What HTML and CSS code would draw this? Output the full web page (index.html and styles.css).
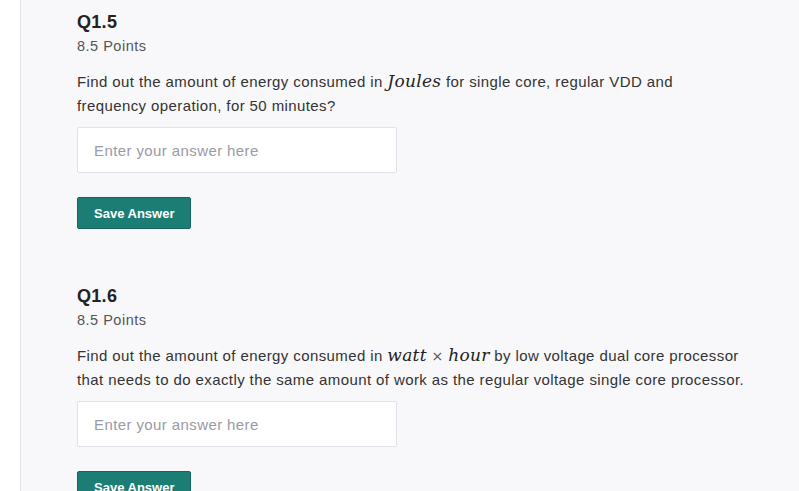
FILE: index.html
```html
<!DOCTYPE html>
<html>
<head>
<meta charset="utf-8">
<link rel="stylesheet" href="styles.css">
</head>
<body>
<div class="page">
  <div class="gutter"></div>
  <main class="main">
    <section class="question">
      <h2 class="qtitle">Q1.5</h2>
      <div class="points">8.5 Points</div>
      <p class="qtext">Find out the amount of energy consumed in <span class="math">Joules</span> for single core, regular VDD and frequency operation, for 50 minutes?</p>
      <input class="answer" type="text" placeholder="Enter your answer here">
      <button class="save">Save Answer</button>
    </section>
    <section class="question">
      <h2 class="qtitle">Q1.6</h2>
      <div class="points">8.5 Points</div>
      <p class="qtext">Find out the amount of energy consumed in <span class="math">watt</span> <span class="times">×</span> <span class="math">hour</span> by low voltage dual core processor that needs to do exactly the same amount of work as the regular voltage single core processor.</p>
      <input class="answer" type="text" placeholder="Enter your answer here">
      <button class="save">Save Answer</button>
    </section>
  </main>
</div>
</body>
</html>
```
FILE: styles.css
```css
html, body {
  margin: 0;
  padding: 0;
  height: 100%;
  overflow: hidden;
}
body {
  font-family: "Liberation Sans", Arial, sans-serif;
  background: #f8f8fa;
}
.page {
  display: flex;
  min-height: 100%;
}
.gutter {
  width: 20px;
  flex: none;
  background: #ffffff;
  border-right: 1px solid #e2e2ea;
}
.main {
  flex: 1;
  padding: 11px 0 0 56px;
}
.question {
  display: flex;
  flex-direction: column;
  align-items: flex-start;
  margin-bottom: 56px;
}
.qtitle {
  margin: 0;
  font-size: 18px;
  line-height: 22px;
  font-weight: 700;
  letter-spacing: 0.3px;
  color: #222;
}
.points {
  margin-top: 3px;
  font-size: 14.5px;
  line-height: 20px;
  letter-spacing: 0.5px;
  color: #555;
}
.qtext {
  margin: 13px 0 0;
  width: 668px;
  font-size: 15px;
  line-height: 24px;
  letter-spacing: 0.4px;
  color: #333;
}
.math {
  font-family: "DejaVu Serif", serif;
  font-style: italic;
  font-size: 17px;
  letter-spacing: 0.3px;
  color: #222;
}
.times {
  font-family: "DejaVu Sans", sans-serif;
  font-size: 14px;
  color: #555;
}
.answer {
  margin-top: 9px;
  box-sizing: border-box;
  width: 320px;
  height: 46px;
  padding: 0 16px;
  border: 1px solid #e1e1ea;
  border-radius: 2px;
  background: #fff;
  font-family: "Liberation Sans", Arial, sans-serif;
  font-size: 15px;
  letter-spacing: 0.4px;
  color: #333;
  outline: none;
}
.answer::placeholder {
  color: #9a9aa6;
}
.save {
  margin-top: 24px;
  box-sizing: border-box;
  height: 32px;
  padding: 0 16px;
  border: 1px solid #16645e;
  border-radius: 2px;
  background: #1c7d75;
  color: #fff;
  font-family: "Liberation Sans", Arial, sans-serif;
  font-size: 13px;
  font-weight: 700;
}
```
